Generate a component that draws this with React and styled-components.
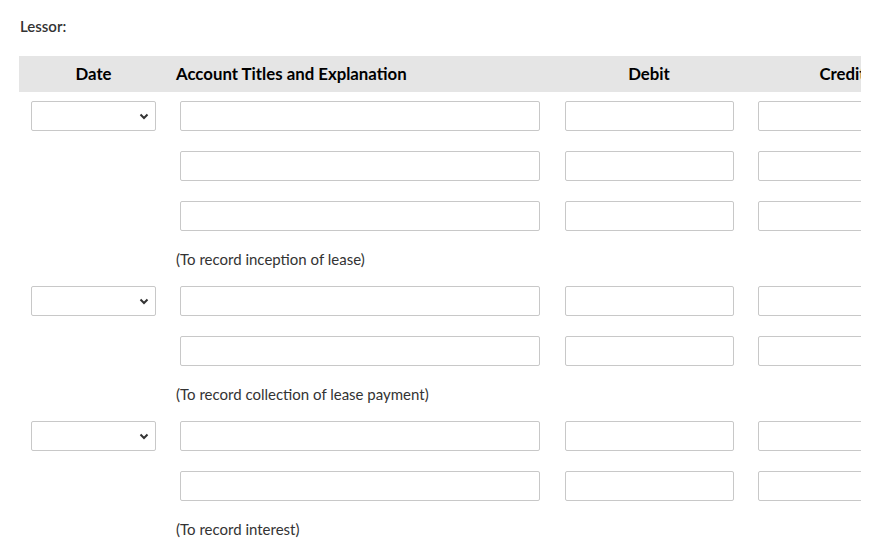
import styled, { createGlobalStyle } from "styled-components";

const GlobalStyle = createGlobalStyle`
  * { box-sizing: border-box; }
  body {
    margin: 0;
    background: #fff;
    font-family: Lato, "Open Sans", sans-serif;
    color: #333;
  }
`;

const Page = styled.div`
  padding: 16px 16px 0 19px;
`;

const Title = styled.div`
  font-size: 15px;
  font-weight: 600;
  color: #333;
  padding-left: 1px;
  height: 40px;
  line-height: 20px;
`;

const TableClip = styled.div`
  width: 842px;
  overflow: hidden;
`;

const Grid = styled.div`
  display: grid;
  grid-template-columns: 149px 384px 194px 193px;
  width: 920px;
`;

const HeadCell = styled.div`
  background: #e5e5e5;
  height: 36px;
  display: flex;
  align-items: center;
  justify-content: ${(p) => (p.$left ? "flex-start" : "center")};
  padding-left: ${(p) => (p.$left ? "8px" : "0")};
  padding-bottom: 1px;
  font-size: 16.8px;
  font-weight: 700;
  color: #000;
`;

const Cell = styled.div`
  height: 50px;
  display: flex;
  align-items: flex-start;
  justify-content: ${(p) => (p.$left ? "flex-start" : "center")};
  padding-top: 9px;
  padding-left: ${(p) => (p.$left ? "12px" : "0")};
`;

const Input = styled.input`
  width: ${(p) => p.$w}px;
  height: 30px;
  border: 1px solid #c8c8c8;
  border-radius: 2px;
  background: #fff;
  font-family: inherit;
  font-size: 14px;
  padding: 0 6px;
  outline: none;
`;

const SelectBox = styled.div`
  position: relative;
  width: 125px;
  height: 30px;
  border: 1px solid #c8c8c8;
  border-radius: 2px;
  background: #fff;
`;

const Chevron = styled.svg`
  position: absolute;
  right: 6px;
  top: 11px;
`;

const Note = styled.div`
  grid-column: 2 / span 3;
  height: 35px;
  display: flex;
  align-items: center;
  padding-left: 8px;
  padding-bottom: 2px;
  font-size: 15px;
  color: #333;
`;

const Spacer = styled.div`
  height: 35px;
`;

function DateSelect() {
  return (
    <SelectBox>
      <Chevron width="10" height="7" viewBox="0 0 10 7">
        <path d="M1.5 1.5 L5 5 L8.5 1.5" fill="none" stroke="#333" strokeWidth="2" />
      </Chevron>
    </SelectBox>
  );
}

const entries = [
  { rows: 3, note: "(To record inception of lease)" },
  { rows: 2, note: "(To record collection of lease payment)" },
  { rows: 2, note: "(To record interest)" },
];

export default function App() {
  return (
    <>
      <GlobalStyle />
      <Page>
        <Title>Lessor:</Title>
        <TableClip>
          <Grid>
            <HeadCell>Date</HeadCell>
            <HeadCell $left>Account Titles and Explanation</HeadCell>
            <HeadCell>Debit</HeadCell>
            <HeadCell>Credit</HeadCell>
            {entries.map((entry, e) =>
              [...Array(entry.rows)].map((_, i) => [
                <Cell key={`d${e}-${i}`}>{i === 0 && <DateSelect />}</Cell>,
                <Cell key={`a${e}-${i}`} $left>
                  <Input $w={360} />
                </Cell>,
                <Cell key={`db${e}-${i}`}>
                  <Input $w={169} />
                </Cell>,
                <Cell key={`c${e}-${i}`}>
                  <Input $w={169} />
                </Cell>,
              ]).concat([
                <Spacer key={`s${e}`} />,
                <Note key={`n${e}`}>{entry.note}</Note>,
              ])
            )}
          </Grid>
        </TableClip>
      </Page>
    </>
  );
}
